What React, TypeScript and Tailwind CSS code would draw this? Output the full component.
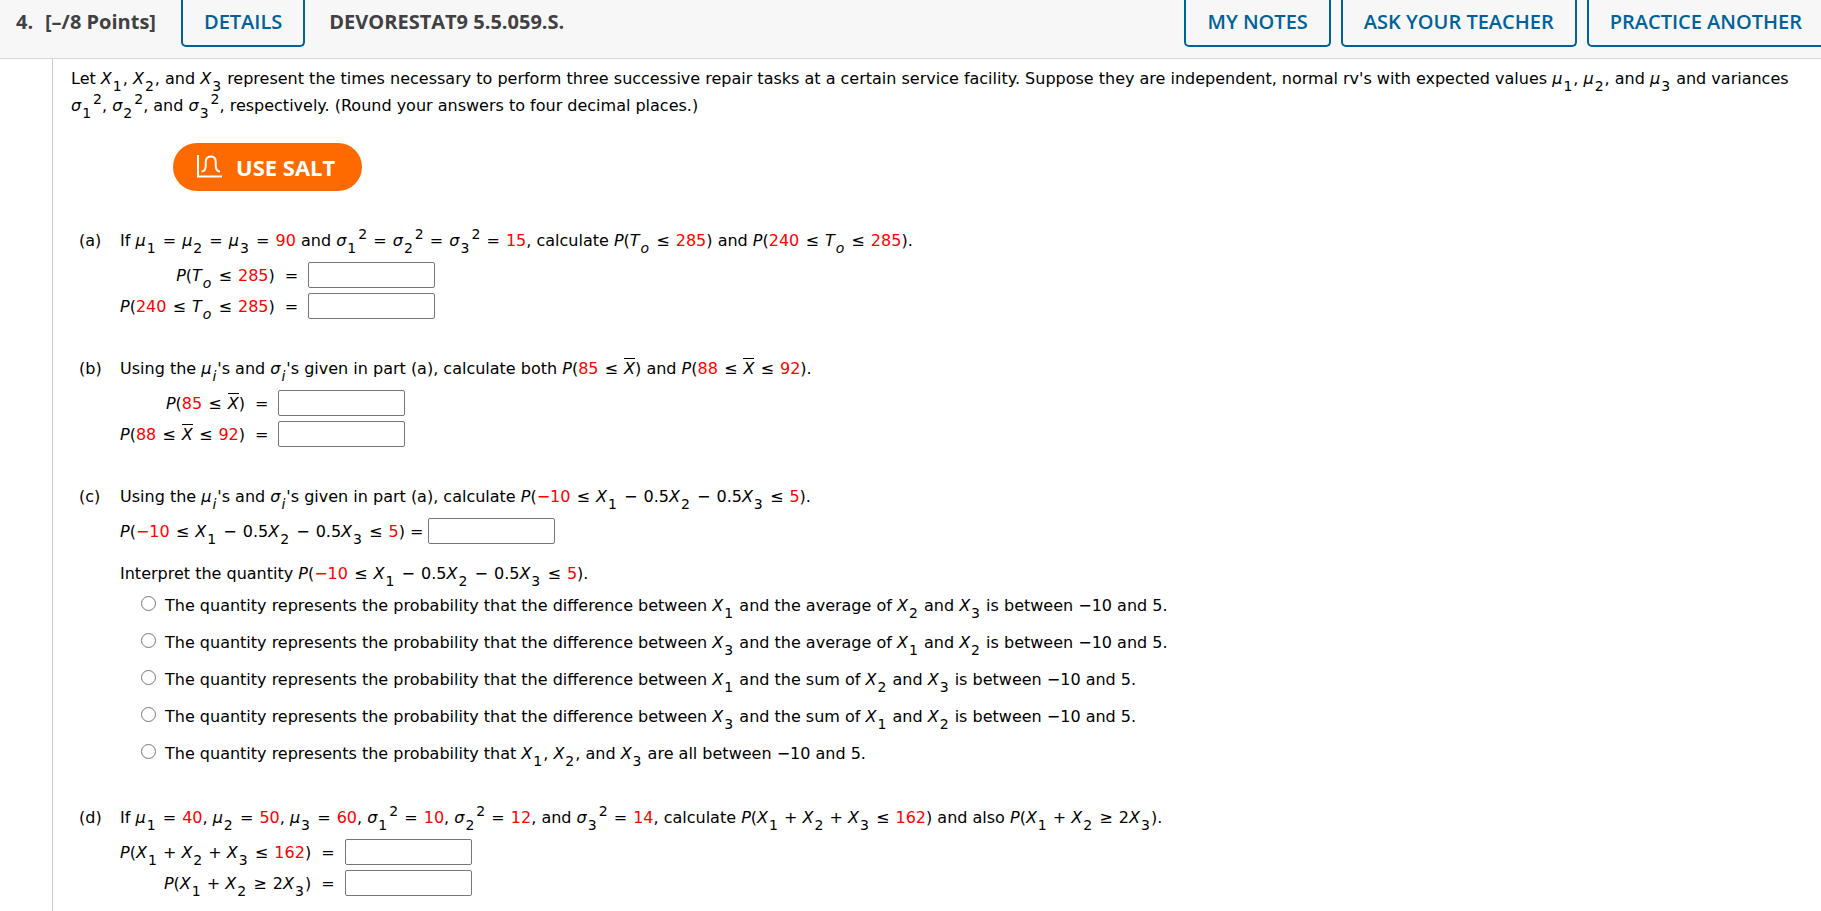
import React from 'react';

type Props = { children?: React.ReactNode };

const Sub = ({ children }: Props) => (
  <sub className="static mx-px align-[-7px] text-[14px] leading-[0]">{children}</sub>
);

const Sup = ({ children }: Props) => (
  <sup className="static ml-px align-[7px] text-[14px] leading-[0]">{children}</sup>
);

const Red = ({ children }: Props) => (
  <span className="text-[#ff0000]">{children}</span>
);

// italic letter with a subscript
const V = ({ n, k }: { n: string; k: string | number }) => (
  <>
    <i>{n}</i>
    <Sub>{k}</Sub>
  </>
);

const Mu = ({ k }: { k: number }) => <V n="μ" k={k} />;
const X = ({ k }: { k: number }) => <V n="X" k={k} />;

// relation or minus sign with a little room on both sides
const Op = ({ children }: Props) => <span className="mx-px">{children}</span>;

const Le = () => <Op>≤</Op>;
const Eq = () => <Op>=</Op>;

const To = () => (
  <i>
    T<Sub>o</Sub>
  </i>
);

const Sigma2 = ({ k }: { k: number }) => (
  <span className="whitespace-nowrap">
    <V n="σ" k={k} />
    <Sup>2</Sup>
  </span>
);

const XBar = () => <i className="border-t border-black leading-none">X</i>;

const ToMax = () => (
  <>
    <i>P</i>(<To /> <Le /> <Red>285</Red>)
  </>
);

const ToRange = () => (
  <>
    <i>P</i>(<Red>240</Red> <Le /> <To /> <Le /> <Red>285</Red>)
  </>
);

const BarMin = () => (
  <>
    <i>P</i>(<Red>85</Red> <Le /> <XBar />)
  </>
);

const BarRange = () => (
  <>
    <i>P</i>(<Red>88</Red> <Le /> <XBar /> <Le /> <Red>92</Red>)
  </>
);

const Diff = () => (
  <>
    <i>P</i>(<Red>−10</Red> <Le /> <X k={1} /> <Op>−</Op> 0.5
    <X k={2} /> <Op>−</Op> 0.5
    <X k={3} /> <Le /> <Red>5</Red>)
  </>
);

const SumMax = () => (
  <>
    <i>P</i>(<X k={1} /> + <X k={2} /> + <X k={3} /> <Le /> <Red>162</Red>)
  </>
);

const SumTwo = () => (
  <>
    <i>P</i>(<X k={1} /> + <X k={2} /> <Op>≥</Op> 2<X k={3} />)
  </>
);

const GivenA = () => (
  <>
    Using the <i>μ</i>
    <Sub>
      <i>i</i>
    </Sub>
    's and <i>σ</i>
    <Sub>
      <i>i</i>
    </Sub>
    's given in part (a), calculate
  </>
);

const Answer = ({ id }: { id: string }) => (
  <input
    id={id}
    type="text"
    className="h-[26px] w-[127px] rounded-[2px] border border-[#767676] bg-white px-1"
  />
);

function AnswerGrid({ rows }: { rows: { id: string; label: React.ReactNode }[] }) {
  return (
    <div className="mt-2 flex w-max flex-col items-stretch gap-[5px]">
      {rows.map((row) => (
        <div key={row.id} className="flex h-[26px] items-center justify-end gap-[10px]">
          <label htmlFor={row.id}>{row.label}</label>
          <span>=</span>
          <Answer id={row.id} />
        </div>
      ))}
    </div>
  );
}

function Part({ letter, children }: { letter: string; children: React.ReactNode }) {
  return (
    <section className="flex">
      <div className="w-[41px] shrink-0">({letter})</div>
      <div>{children}</div>
    </section>
  );
}

function HeaderButton({ children }: Props) {
  return (
    <button className="h-[47px] shrink-0 rounded-b-[5px] border-2 border-t-0 border-[#006298] px-[21px] pb-[2px] font-semibold text-[#006298]">
      {children}
    </button>
  );
}

const Lead = () => (
  <>The quantity represents the probability that the difference between </>
);

const options = [
  <>
    <Lead />
    <X k={1} /> and the average of <X k={2} /> and <X k={3} /> is between −10 and 5.
  </>,
  <>
    <Lead />
    <X k={3} /> and the average of <X k={1} /> and <X k={2} /> is between −10 and 5.
  </>,
  <>
    <Lead />
    <X k={1} /> and the sum of <X k={2} /> and <X k={3} /> is between −10 and 5.
  </>,
  <>
    <Lead />
    <X k={3} /> and the sum of <X k={1} /> and <X k={2} /> is between −10 and 5.
  </>,
  <>
    The quantity represents the probability that <X k={1} />, <X k={2} />, and <X k={3} /> are all
    between −10 and 5.
  </>,
];

function App() {
  return (
    <div className="overflow-hidden bg-white">
      <header className="flex h-[59px] items-start whitespace-nowrap border-b border-[#d8d8d8] bg-[#f7f7f7] pl-4 font-['Open_Sans',sans-serif] text-[20px]">
        <h2 className="flex h-11 items-center font-bold text-[#414042]">
          <span className="w-[29px]">4.</span>
          <span className="w-[136px]">[–/8 Points]</span>
        </h2>
        <HeaderButton>DETAILS</HeaderButton>
        <div className="ml-6 flex h-11 items-center font-bold text-[#414042]">
          DEVORESTAT9 5.5.059.S.
        </div>
        <div className="-mr-1 ml-auto flex gap-[10px]">
          <HeaderButton>MY NOTES</HeaderButton>
          <HeaderButton>ASK YOUR TEACHER</HeaderButton>
          <HeaderButton>PRACTICE ANOTHER</HeaderButton>
        </div>
      </header>

      <main className="ml-[52px] border-l border-[#c8c8c8] pb-4 pl-[18px] pt-[6px] font-['DejaVu_Sans',sans-serif] text-[16px] leading-[27px] text-black">
        <p>
          Let <X k={1} />, <X k={2} />, and <X k={3} /> represent the times necessary to perform
          three successive repair tasks at a certain service facility. Suppose they are
          independent, normal rv's with expected values <Mu k={1} />, <Mu k={2} />, and{' '}
          <Mu k={3} /> and variances <Sigma2 k={1} />, <Sigma2 k={2} />, and <Sigma2 k={3} />,
          respectively. (Round your answers to four decimal places.)
        </p>

        <button className="ml-[102px] mt-6 flex h-12 w-[189px] items-center rounded-full bg-[#ff6a00] pl-[23px] font-['Open_Sans',sans-serif] text-[22px] font-bold text-white">
          <svg
            className="mb-[2px] mr-[14px] h-[24px] w-[26px]"
            viewBox="0 0 26 24"
            fill="none"
            stroke="currentColor"
            strokeWidth="2"
          >
            <path d="M2 1v21.500H26" />
            <path d="M5.500 17.500c3 0 4-2 4.250-5.500V8c0-4 1.500-5.500 5-5.500s5 1.500 5 5.500v4c.25 3.500 1.250 5.500 4.250 5.500" />
          </svg>
          USE SALT
        </button>

        <div className="mt-9 flex flex-col gap-9 pl-2">
          <Part letter="a">
            <p>
              If <Mu k={1} /> <Eq /> <Mu k={2} /> <Eq /> <Mu k={3} /> <Eq /> <Red>90</Red> and{' '}
              <Sigma2 k={1} /> <Eq /> <Sigma2 k={2} /> <Eq /> <Sigma2 k={3} /> <Eq />{' '}
              <Red>15</Red>, calculate <ToMax /> and <ToRange />.
            </p>
            <AnswerGrid
              rows={[
                { id: 'a1', label: <ToMax /> },
                { id: 'a2', label: <ToRange /> },
              ]}
            />
          </Part>

          <Part letter="b">
            <p>
              <GivenA /> both <BarMin /> and <BarRange />.
            </p>
            <AnswerGrid
              rows={[
                { id: 'b1', label: <BarMin /> },
                { id: 'b2', label: <BarRange /> },
              ]}
            />
          </Part>

          <Part letter="c">
            <p>
              <GivenA /> <Diff />.
            </p>
            <div className="mt-2 flex h-[26px] items-center gap-1">
              <label htmlFor="c1">
                <Diff /> =
              </label>
              <Answer id="c1" />
            </div>
            <fieldset className="-mb-1 mt-4">
              <legend>
                Interpret the quantity <Diff />.
              </legend>
              {options.map((option, i) => (
                <div key={i} className="flex h-[37px] items-center pl-[21px]">
                  <input
                    id={`interpret-${i}`}
                    type="radio"
                    name="interpret"
                    className="mb-1 mr-[9px] h-[15px] w-[15px] shrink-0"
                  />
                  <label htmlFor={`interpret-${i}`}>{option}</label>
                </div>
              ))}
            </fieldset>
          </Part>

          <Part letter="d">
            <p>
              If <Mu k={1} /> <Eq /> <Red>40</Red>, <Mu k={2} /> <Eq /> <Red>50</Red>,{' '}
              <Mu k={3} /> <Eq /> <Red>60</Red>, <Sigma2 k={1} /> <Eq /> <Red>10</Red>,{' '}
              <Sigma2 k={2} /> <Eq /> <Red>12</Red>, and <Sigma2 k={3} /> <Eq /> <Red>14</Red>,
              calculate <SumMax /> and also <SumTwo />.
            </p>
            <AnswerGrid
              rows={[
                { id: 'd1', label: <SumMax /> },
                { id: 'd2', label: <SumTwo /> },
              ]}
            />
          </Part>
        </div>
      </main>
    </div>
  );
}

export default App;
